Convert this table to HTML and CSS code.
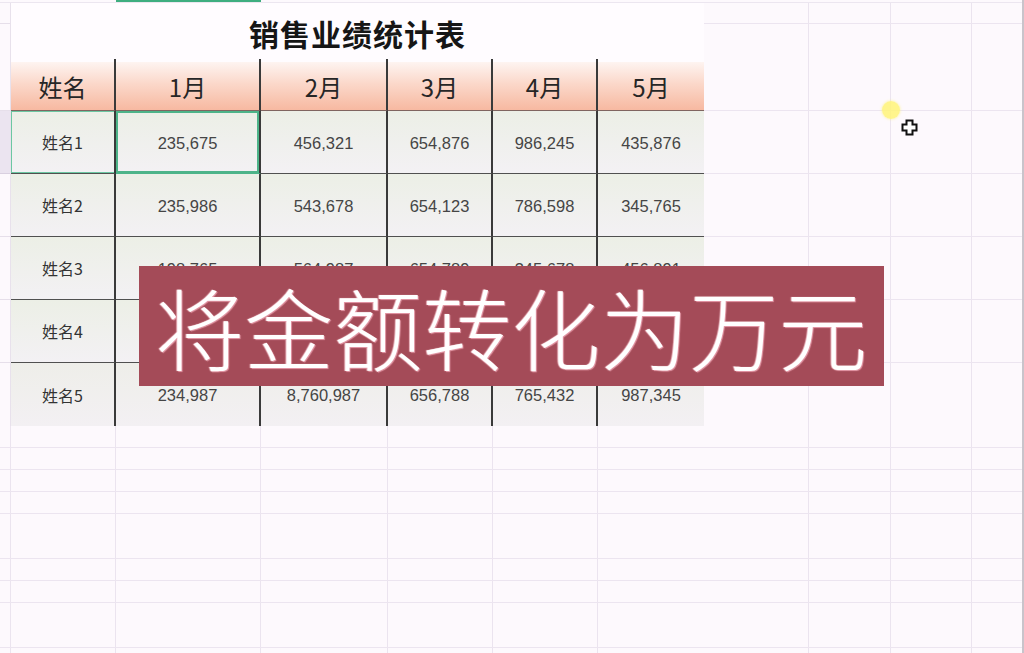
FILE: index.html
```html
<!DOCTYPE html>
<html lang="zh">
<head>
<meta charset="utf-8">
<title>销售业绩统计表</title>
<link rel="stylesheet" href="styles.css">
</head>
<body>
<div class="page">
  <div class="topbar"><span class="sel-col"></span></div>

  <div class="middle">
    <div class="strip">
      <div class="sr h21"></div>
      <div class="sr h87"></div>
      <div class="sr h63 active"></div>
      <div class="sr h63"></div>
      <div class="sr h63"></div>
      <div class="sr h63"></div>
      <div class="sr h63 last"></div>
    </div>

    <div class="table">
      <div class="title">销售业绩统计表</div>
      <div class="hd">姓名</div>
      <div class="hd">1月</div>
      <div class="hd">2月</div>
      <div class="hd">3月</div>
      <div class="hd">4月</div>
      <div class="hd end">5月</div>

      <div class="cell name sel-a">姓名1</div>
      <div class="cell num sel-b">235,675</div>
      <div class="cell num">456,321</div>
      <div class="cell num">654,876</div>
      <div class="cell num">986,245</div>
      <div class="cell num end">435,876</div>

      <div class="cell name">姓名2</div>
      <div class="cell num">235,986</div>
      <div class="cell num">543,678</div>
      <div class="cell num">654,123</div>
      <div class="cell num">786,598</div>
      <div class="cell num end">345,765</div>

      <div class="cell name">姓名3</div>
      <div class="cell num">198,765</div>
      <div class="cell num">564,987</div>
      <div class="cell num">654,789</div>
      <div class="cell num">345,678</div>
      <div class="cell num end">456,891</div>

      <div class="cell name">姓名4</div>
      <div class="cell num"></div>
      <div class="cell num"></div>
      <div class="cell num"></div>
      <div class="cell num"></div>
      <div class="cell num end"></div>

      <div class="cell name bottom">姓名5</div>
      <div class="cell num bottom">234,987</div>
      <div class="cell num bottom">8,760,987</div>
      <div class="cell num bottom">656,788</div>
      <div class="cell num bottom">765,432</div>
      <div class="cell num bottom end">987,345</div>
    </div>

    <div class="rpane">
      <div class="rrow h21"><span></span><span></span><span></span><span></span></div>
      <div class="rrow h87"><span></span><span></span><span></span><span></span></div>
      <div class="rrow h63"><span></span><span></span><span></span><span></span></div>
      <div class="rrow h63"><span></span><span></span><span></span><span></span></div>
      <div class="rrow h63"><span></span><span></span><span></span><span></span></div>
      <div class="rrow h63"><span></span><span></span><span></span><span></span></div>
      <div class="rrow h63 last"><span></span><span></span><span></span><span></span></div>
    </div>
  </div>

  <div class="lower">
    <div class="lrow h22"><span></span><span></span><span></span><span></span><span></span><span></span><span></span><span></span><span></span><span></span></div>
    <div class="lrow h22"><span></span><span></span><span></span><span></span><span></span><span></span><span></span><span></span><span></span><span></span></div>
    <div class="lrow h22"><span></span><span></span><span></span><span></span><span></span><span></span><span></span><span></span><span></span><span></span></div>
    <div class="lrow h22"><span></span><span></span><span></span><span></span><span></span><span></span><span></span><span></span><span></span><span></span></div>
    <div class="lrow h45"><span></span><span></span><span></span><span></span><span></span><span></span><span></span><span></span><span></span><span></span></div>
    <div class="lrow h22"><span></span><span></span><span></span><span></span><span></span><span></span><span></span><span></span><span></span><span></span></div>
    <div class="lrow h22"><span></span><span></span><span></span><span></span><span></span><span></span><span></span><span></span><span></span><span></span></div>
    <div class="lrow h45"><span></span><span></span><span></span><span></span><span></span><span></span><span></span><span></span><span></span><span></span></div>
    <div class="lrow rest"><span></span><span></span><span></span><span></span><span></span><span></span><span></span><span></span><span></span><span></span></div>
  </div>

  <div class="banner">将金额转化为万元</div>
  <div class="tap-dot"></div>
  <svg class="cursor" width="17" height="17" viewBox="0 0 17 17">
    <path d="M5.5 1.5h6v4h4v6h-4v4h-6v-4h-4v-6h4z" fill="#fff" stroke="#111" stroke-width="2" stroke-linejoin="miter"/>
  </svg>
</div>
</body>
</html>
```

FILE: styles.css
```css
* { box-sizing: border-box; margin: 0; padding: 0; }

html, body {
  width: 1024px;
  height: 653px;
  overflow: hidden;
  background: #fdf9fd;
}

.page {
  position: relative;
  width: 1024px;
  height: 653px;
  display: flex;
  flex-direction: column;
  border-right: 2px solid #c9c4cb;
  font-family: "Liberation Sans", "Noto Sans CJK SC", sans-serif;
}

/* top column-header remnant */
.topbar {
  height: 3px;
  border-bottom: 1px solid #ece6f0;
  display: flex;
}
.sel-col {
  margin-left: 116px;
  width: 145px;
  height: 2px;
  background: #3fae80;
}

.middle {
  display: flex;
  height: 423px;
}

/* left row-header strip */
.strip {
  width: 11px;
  display: flex;
  flex-direction: column;
  border-right: 1px solid #e8e1ec;
}
.sr { border-bottom: 1px solid #e6dfea; }
.sr.active { background: #ebe4f0; border-bottom-color: #d9d0e0; }
.sr.last { border-bottom: none; }

.h21 { height: 21px; }
.h87 { height: 87px; }
.h63 { height: 63px; }
.h22 { height: 22px; }
.h45 { height: 45px; }

/* table */
.table {
  width: 693px;
  display: grid;
  grid-template-columns: 105px 145px 127px 105px 105px 106px;
  grid-template-rows: 59px 49px repeat(5, 63px);
}

.title {
  grid-column: 1 / -1;
  background: #fffcff;
  display: flex;
  justify-content: center;
  align-items: center;
  padding-top: 0;
  font-family: "Noto Sans CJK SC", sans-serif;
  font-weight: 700;
  font-size: 30px;
  letter-spacing: 1px;
  color: #161616;
}

.hd {
  background: linear-gradient(#fef4f1 0%, #fbd8ca 45%, #f7b9a1 100%);
  border-right: 2px solid #3a3a3a;
  border-bottom: 1px solid #806560;
  display: flex;
  align-items: center;
  justify-content: center;
  font-family: "Noto Sans CJK SC", sans-serif;
  font-size: 24px;
  color: #262626;
  position: relative;
}
.hd::before {
  content: "";
  position: absolute;
  right: -2px;
  top: -3px;
  height: 3px;
  width: 2px;
  background: #3a3a3a;
}
.hd.end { border-right: none; }
.hd.end::before { display: none; }

.cell {
  background: linear-gradient(#ecefe6, #f3f1f4);
  border-right: 2px solid #3a3a3a;
  border-bottom: 1px solid #505050;
  display: flex;
  align-items: center;
  justify-content: center;
  color: #454545;
}
.cell.end { border-right: none; }
.cell.bottom { border-bottom: none; background: linear-gradient(#eeeee9, #f3f0f3); }

.name {
  font-family: "Noto Sans CJK SC", sans-serif;
  font-size: 16px;
  color: #333;
}
.num {
  font-family: "Liberation Sans", sans-serif;
  font-size: 16.5px;
  padding-top: 2px;
}

.sel-a {
  box-shadow: inset 1px 1px 0 #6cc7a2, inset 0 -1px 0 #6cc7a2;
}
.sel-b {
  box-shadow: inset 0 0 0 2px #4db489;
  border-bottom-color: #4db489;
}

/* right side grid */
.rpane {
  flex: 1;
  display: flex;
  flex-direction: column;
}
.rrow {
  display: grid;
  grid-template-columns: 105px 82px 81px 1fr;
  border-bottom: 1px solid #ece5f0;
}
.rrow.last { border-bottom: none; }
.rrow span { border-right: 1px solid #ebe4ef; }
.rrow span:last-child { border-right: none; }

/* lower grid */
.lower {
  flex: 1;
  display: flex;
  flex-direction: column;
}
.lrow {
  display: grid;
  grid-template-columns: 11px 105px 145px 127px 105px 105px 211px 82px 81px 1fr;
  border-bottom: 1px solid #ece5f0;
}
.lrow.rest { flex: 1; border-bottom: none; }
.lrow span { border-right: 1px solid #ebe4ef; }
.lrow span:last-child { border-right: none; }

/* overlays */
.banner {
  position: absolute;
  left: 139px;
  top: 266px;
  width: 745px;
  height: 120px;
  background: #a44b58;
  color: #fff;
  font-family: "Noto Sans CJK SC", sans-serif;
  font-weight: 300;
  font-size: 89px;
  line-height: 120px;
  text-align: center;
  letter-spacing: 0;
  text-shadow: 1px 1px 1px #e59aa8, -1px 0 1px #f0c0c8;
}

.tap-dot {
  position: absolute;
  left: 882px;
  top: 101px;
  width: 18px;
  height: 18px;
  border-radius: 50%;
  background: rgba(255, 244, 120, 0.85);
  box-shadow: 0 0 3px rgba(255, 244, 120, 0.8);
}

.cursor {
  position: absolute;
  left: 901px;
  top: 119px;
}
```
